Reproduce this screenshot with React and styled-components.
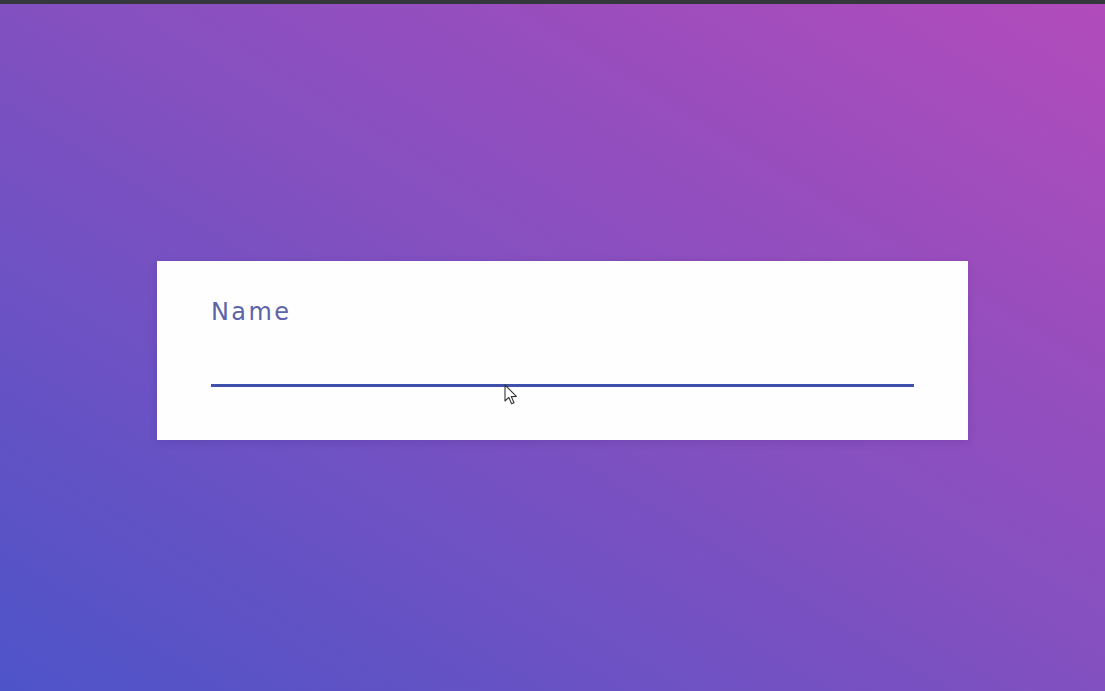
import React from "react";
import styled, { createGlobalStyle } from "styled-components";

const Global = createGlobalStyle`
  html, body { margin: 0; padding: 0; height: 100%; }
  body { font-family: "DejaVu Sans", "Liberation Sans", sans-serif; }
  #root { height: 100%; }
`;

const Page = styled.div`
  display: flex;
  flex-direction: column;
  width: 1105px;
  height: 691px;
  overflow: hidden;
`;

const TopBar = styled.div`
  height: 4px;
  flex: none;
  background: #34373b;
`;

const Stage = styled.main`
  flex: 1;
  display: flex;
  align-items: flex-start;
  padding: 257px 0 0 157px;
  background: linear-gradient(to top right, #4d54c8 0%, #8250c0 50%, #b24bbb 100%);
`;

const Card = styled.form`
  position: relative;
  width: 811px;
  height: 179px;
  box-sizing: border-box;
  padding: 33px 54px 0 54px;
  background: #fefefe;
  box-shadow: 0 2px 8px rgba(40, 20, 90, 0.14);
  display: flex;
  flex-direction: column;
`;

const Label = styled.label`
  font-family: "DejaVu Sans", "Liberation Sans", sans-serif;
  font-weight: 400;
  font-size: 24px;
  line-height: 36px;
  color: #5d63a8;
  letter-spacing: 2.4px;
`;

const Input = styled.input`
  margin-top: 18px;
  width: 100%;
  height: 39px;
  box-sizing: border-box;
  border: none;
  border-bottom: 3px solid #4050ad;
  background: transparent;
  outline: none;
  font-size: 20px;
  padding: 0;
`;

const Cursor = styled.svg`
  position: absolute;
  left: 347px;
  top: 123px;
  width: 14px;
  height: 22px;
  pointer-events: none;
`;

export default function App() {
  return (
    <>
      <Global />
      <Page>
        <TopBar />
        <Stage>
          <Card onSubmit={(e) => e.preventDefault()}>
            <Label htmlFor="name">Name</Label>
            <Input id="name" type="text" />
            <Cursor viewBox="0 0 14 22">
              <path
                d="M1 1 L1 17 L4.8 13.4 L7.6 19.8 L10 18.8 L7.3 12.6 L12.4 12.4 Z"
                fill="#ffffff"
                stroke="#333"
                strokeWidth="1.1"
                strokeLinejoin="round"
              />
            </Cursor>
          </Card>
        </Stage>
      </Page>
    </>
  );
}
